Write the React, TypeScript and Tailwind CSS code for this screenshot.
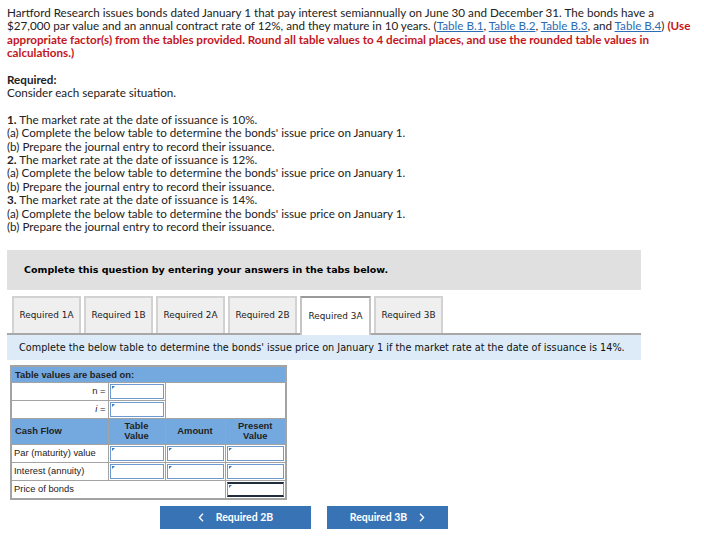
import React from 'react';

const tabs = ['Required 1A', 'Required 1B', 'Required 2A', 'Required 2B', 'Required 3A', 'Required 3B'];

function Field({ total = false }: { total?: boolean }) {
    return (
        <div
            className={`relative h-[15px] bg-white border ${
                total ? 'border-x-[#6d9bd1] border-t-[#1f2d3d] border-b-[#1f2d3d] border-t-2 border-b-2' : 'border-[#6d9bd1]'
            }`}
        >
            <span className="absolute left-[1px] top-[1px] w-0 h-0 border-t-[3px] border-t-[#3b78c4] border-r-[3px] border-r-transparent" />
        </div>
    );
}

export default function App() {
    return (
        <div className="w-[704px] h-[538px] bg-white text-[#222] overflow-hidden">
            <div className="px-[7px] pt-[6px] text-[11.65px] leading-[13.4px] font-['Lato','Open_Sans',sans-serif]">
                <p>
                    Hartford Research issues bonds dated January 1 that pay interest semiannually on June 30 and December 31. The bonds have a
                    $27,000 par value and an annual contract rate of 12%, and they mature in 10 years. (
                    <a className="text-[#2b6cb5] underline">Table B.1</a>, <a className="text-[#2b6cb5] underline">Table B.2</a>,{' '}
                    <a className="text-[#2b6cb5] underline">Table B.3</a>, and <a className="text-[#2b6cb5] underline">Table B.4</a>){' '}
                    <span className="font-bold text-[#c4161c]">
                        (Use appropriate factor(s) from the tables provided. Round all table values to 4 decimal places, and use the rounded table values in calculations.)
                    </span>
                </p>

                <p className="mt-[13.4px] font-bold">Required:</p>
                <p>Consider each separate situation.</p>

                <div className="mt-[13px]">
                    <p><b>1.</b> The market rate at the date of issuance is 10%.</p>
                    <p>(a) Complete the below table to determine the bonds' issue price on January 1.</p>
                    <p>(b) Prepare the journal entry to record their issuance.</p>
                    <p><b>2.</b> The market rate at the date of issuance is 12%.</p>
                    <p>(a) Complete the below table to determine the bonds' issue price on January 1.</p>
                    <p>(b) Prepare the journal entry to record their issuance.</p>
                    <p><b>3.</b> The market rate at the date of issuance is 14%.</p>
                    <p>(a) Complete the below table to determine the bonds' issue price on January 1.</p>
                    <p>(b) Prepare the journal entry to record their issuance.</p>
                </div>
            </div>

            <div className="ml-[7px] mt-[17px] w-[634px] font-['DejaVu_Sans','Verdana',sans-serif]">
                <div className="h-[40px] bg-[#e0e0e0] flex items-center pl-[17px] text-[9.5px] font-bold text-black">
                    Complete this question by entering your answers in the tabs below.
                </div>

                <div className="mt-[6px] flex gap-[3px] pl-[5px] h-[37px] items-end">
                    {tabs.map((t) => {
                        const active = t === 'Required 3A';
                        return (
                            <div
                                key={t}
                                className={`flex items-center justify-center whitespace-nowrap text-[8.9px] text-[#222] border-2 border-b-0 ${
                                    active
                                        ? 'bg-white border-[#c4c4c4] border-t-[#9a9a9a] -mb-[2px] relative z-10 h-[39px] w-[71px]'
                                        : 'bg-[#efefef] border-[#d2d2d2] h-[37px] w-[69px]'
                                }`}
                            >
                                {t}
                            </div>
                        );
                    })}
                </div>

                <div className="h-[27px] bg-[#dcebf7] border-t-2 border-[#a8a8a8] flex items-center pl-[12px] text-[9.7px] text-[#111] whitespace-nowrap">
                    Complete the below table to determine the bonds' issue price on January 1 if the market rate at the date of issuance is 14%.
                </div>
            </div>

            <div className="ml-[10px] mt-[5px] w-[277px] font-['Liberation_Sans','Arial',sans-serif] text-[9.4px] text-[#222]">
                <table className="w-full border-collapse border-2 border-[#a3a3a3] table-fixed">
                    <colgroup>
                        <col className="w-[97px]" />
                        <col className="w-[57px]" />
                        <col className="w-[60px]" />
                        <col />
                    </colgroup>
                    <tbody>
                        <tr className="h-[16px] bg-[#74a9df]">
                            <td colSpan={4} className="px-[3px] font-bold border border-[#a3a3a3]">Table values are based on:</td>
                        </tr>
                        <tr className="h-[17px]">
                            <td className="text-right pr-[2px] border border-[#a3a3a3]">n =</td>
                            <td className="border border-[#a3a3a3] p-[1px]"><Field /></td>
                            <td colSpan={2} rowSpan={2} className="border border-[#a3a3a3]" />
                        </tr>
                        <tr className="h-[17px]">
                            <td className="text-right pr-[2px] border border-[#a3a3a3]"><i>i</i> =</td>
                            <td className="border border-[#a3a3a3] p-[1px]"><Field /></td>
                        </tr>
                        <tr className="h-[26px] bg-[#74a9df] font-bold leading-[10px]">
                            <td className="px-[3px] border border-[#a3a3a3]">Cash Flow</td>
                            <td className="text-center border border-[#a3a3a3]">Table<br />Value</td>
                            <td className="text-center border border-[#a3a3a3]">Amount</td>
                            <td className="text-center border border-[#a3a3a3]">Present<br />Value</td>
                        </tr>
                        <tr className="h-[17px]">
                            <td className="px-[2px] border border-[#a3a3a3]">Par (maturity) value</td>
                            <td className="border border-[#a3a3a3] p-[1px]"><Field /></td>
                            <td className="border border-[#a3a3a3] p-[1px]"><Field /></td>
                            <td className="border border-[#a3a3a3] p-[1px]"><Field /></td>
                        </tr>
                        <tr className="h-[17px]">
                            <td className="px-[2px] border border-[#a3a3a3]">Interest (annuity)</td>
                            <td className="border border-[#a3a3a3] p-[1px]"><Field /></td>
                            <td className="border border-[#a3a3a3] p-[1px]"><Field /></td>
                            <td className="border border-[#a3a3a3] p-[1px]"><Field /></td>
                        </tr>
                        <tr className="h-[17px]">
                            <td colSpan={3} className="px-[2px] border border-[#a3a3a3]">Price of bonds</td>
                            <td className="border border-[#a3a3a3] p-[1px]"><Field total /></td>
                        </tr>
                    </tbody>
                </table>
            </div>

            <div className="ml-[160px] mt-[6px] flex gap-[16px] font-['Lato','Open_Sans',sans-serif] text-[10.5px] font-bold text-white">
                <button className="w-[151px] h-[23px] bg-[#3873b6] flex items-center justify-center gap-[12px]">
                    <svg width="6" height="9" viewBox="0 0 6 9" fill="none" stroke="white" strokeWidth="1.3">
                        <path d="M5 0.8 L1.4 4.5 L5 8.2" />
                    </svg>
                    <span>Required 2B</span>
                </button>
                <button className="w-[121px] h-[23px] bg-[#3873b6] flex items-center justify-center gap-[12px]">
                    <span>Required 3B</span>
                    <svg width="6" height="9" viewBox="0 0 6 9" fill="none" stroke="white" strokeWidth="1.3">
                        <path d="M1 0.8 L4.6 4.5 L1 8.2" />
                    </svg>
                </button>
            </div>
        </div>
    );
}
